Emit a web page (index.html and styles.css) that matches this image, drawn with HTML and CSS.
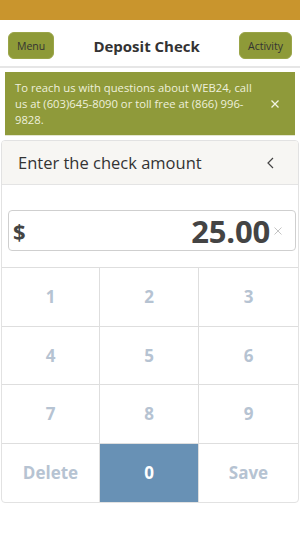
FILE: index.html
```html
<!DOCTYPE html>
<html lang="en">
<head>
<meta charset="utf-8">
<title>Deposit Check</title>
<link rel="stylesheet" href="styles.css">
</head>
<body>
<div class="status"></div>
<header class="topbar">
  <button class="btn">Menu</button>
  <h1 class="title">Deposit Check</h1>
  <button class="btn">Activity</button>
</header>
<div class="notice">
  <p class="notice-text">To reach us with questions about WEB24, call us at (603)645-8090 or toll free at (866) 996-9828.</p>
  <svg class="notice-close" width="8" height="8" viewBox="0 0 8 8"><path d="M0.5 0.5L7.5 7.5M7.5 0.5L0.5 7.5" stroke="#f2f4e4" stroke-width="1.3" fill="none"/></svg>
</div>
<section class="card">
  <div class="card-head">
    <span class="card-title">Enter the check amount</span>
    <svg class="chev" width="7" height="12" viewBox="0 0 7 12"><path d="M6 1L1 6L6 11" stroke="#444" stroke-width="1.2" fill="none"/></svg>
  </div>
  <div class="card-body">
    <div class="amount">
      <span class="cur">$</span>
      <span class="val">25.00</span>
      <svg class="clear" width="8" height="8" viewBox="0 0 8 8"><path d="M0.5 0.5L7.5 7.5M7.5 0.5L0.5 7.5" stroke="#c4c4c4" stroke-width="1" fill="none"/></svg>
    </div>
  </div>
  <div class="keypad">
    <div class="key">1</div>
    <div class="key">2</div>
    <div class="key">3</div>
    <div class="key">4</div>
    <div class="key">5</div>
    <div class="key">6</div>
    <div class="key">7</div>
    <div class="key">8</div>
    <div class="key">9</div>
    <div class="key">Delete</div>
    <div class="key key-active">0</div>
    <div class="key">Save</div>
  </div>
</section>
</body>
</html>
```
FILE: styles.css
```css
* { box-sizing: border-box; }
html, body { margin: 0; padding: 0; background: #fff; }
body { font-family: "Open Sans", "Liberation Sans", sans-serif; color: #333; width: 300px; }

.status { height: 20px; background: #c9952d; }

.topbar {
  display: flex;
  align-items: center;
  justify-content: space-between;
  padding: 12px 8px 7px;
  border-bottom: 2px solid #e6e6e6;
}
.btn {
  height: 27px;
  padding: 0 8px;
  border: 1px solid #9aa548;
  border-radius: 6px;
  background: #8e9a38;
  color: #333;
  font-family: inherit;
  font-size: 10.5px;
}
.title {
  margin: 0;
  font-size: 15px;
  font-weight: 700;
  color: #333;
}

.notice {
  margin: 4px 5px 0;
  height: 64px;
  background: #8f9a3a;
  border-bottom: 1px solid #e4e6cf;
  display: flex;
  align-items: center;
  padding: 0 0 0 10px;
}
.notice-text {
  margin: 0;
  width: 245px;
  font-size: 11.25px;
  line-height: 16px;
  color: #eef0dc;
}
.notice-close { margin-left: 11px; }

.card {
  margin: 4px 1px 0;
  border: 1px solid #e2e2e2;
  border-radius: 4px;
  overflow: hidden;
}
.card-head {
  height: 44px;
  background: #f7f6f3;
  border-bottom: 1px solid #e4e4e4;
  display: flex;
  align-items: center;
  justify-content: space-between;
  padding: 0 24px 0 16px;
}
.card-title { font-size: 16.5px; color: #333; }

.card-body { padding: 25px 2px 16px 6px; }
.amount {
  height: 41px;
  border: 1px solid #cfcfcf;
  border-radius: 4px;
  display: flex;
  align-items: center;
  padding: 0 0 0 4px;
}
.cur { font-size: 22px; font-weight: 700; color: #444; }
.val { margin-left: auto; font-size: 31px; font-weight: 700; color: #444; letter-spacing: -0.2px; }
.clear { margin: 0 13px 0 4px; }

.keypad {
  display: grid;
  grid-template-columns: 98px 99px 1fr;
  grid-auto-rows: 58.5px;
  border-top: 1px solid #dedede;
}
.key {
  display: flex;
  align-items: center;
  justify-content: center;
  font-size: 17px;
  font-weight: 700;
  color: #b6c3d2;
  border-right: 1px solid #dedede;
  border-bottom: 1px solid #dedede;
}
.key:nth-child(3n) { border-right: 0; }
.key:nth-last-child(-n+3) { border-bottom: 0; }
.key-active { background: #6891b5; color: #fff; }
```
